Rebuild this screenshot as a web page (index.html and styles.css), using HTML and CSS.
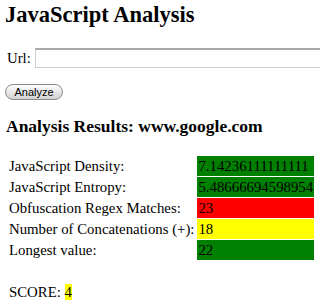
FILE: index.html
```html
<!DOCTYPE html>
<html lang="en">
<head>
<meta charset="UTF-8" />
<title>JavaScript Analysis</title>
<link rel="stylesheet" href="styles.css">
</head>
<body>

<h1>JavaScript Analysis</h1>

<form class="search" onsubmit="return false;">
  <div class="url-row">
    <label for="url">Url:</label>
    <input type="text" id="url" name="url" />
  </div>
  <button type="submit" class="analyze">Analyze</button>
</form>

<h3>Analysis Results: www.google.com</h3>

<table class="results">
  <tr><td>JavaScript Density:</td><td class="good">7.14236111111111</td></tr>
  <tr><td>JavaScript Entropy:</td><td class="good">5.48666694598954</td></tr>
  <tr><td>Obfuscation Regex Matches:</td><td class="bad">23</td></tr>
  <tr><td>Number of Concatenations (+):</td><td class="warn">18</td></tr>
  <tr><td>Longest value:</td><td class="good">22</td></tr>
</table>

<p class="score">SCORE: <span class="warn">4</span></p>

</body>
</html>
```

FILE: styles.css
```css
html {
  overflow: hidden;
}

body {
  margin: 0;
  padding: 0 0 0 7px;
  font-family: "Liberation Serif", "Times New Roman", serif;
  font-size: 14.8px;
  line-height: 17px;
  color: #000;
  background: #fff;
}

h1 {
  font-size: 22.5px;
  line-height: 26px;
  margin: 2px 0 0 -2px;
}

.search {
  margin: 0;
}

.url-row {
  display: flex;
  align-items: center;
  gap: 4px;
  margin-top: 20px;
}

/* the field runs on past the right edge in the original */
.url-row input {
  flex: 1;
  min-width: 0;
  height: 20px;
  box-sizing: border-box;
  padding: 0 2px;
  border: 1px solid #cfcfcf;
  border-top: 2px solid #a8a8a8;
  border-right: none;
  font: inherit;
}

.analyze {
  display: block;
  margin: 16px 0 0 -2px;
  height: 16px;
  width: 58px;
  padding: 0;
  border: 1px solid #8a8a8a;
  border-radius: 8px;
  background: linear-gradient(#ffffff, #e4e4e4 55%, #d2d2d2);
  font-family: "Liberation Sans", Arial, sans-serif;
  font-size: 11px;
  line-height: 14px;
  color: #000;
}

h3 {
  font-size: 17.5px;
  line-height: 20px;
  margin: 16px 0 0 -1px;
}

.results {
  border-spacing: 2px 1.5px;
  margin: 18.5px 0 0 -1px;
}

.results td {
  padding: 1px;
  line-height: 18px;
  white-space: nowrap;
}

.good {
  background: #008000;
}

.bad {
  background: #ff0000;
}

.warn {
  background: #ffff00;
}

.score {
  margin: 23px 0 0 2px;
}
```
